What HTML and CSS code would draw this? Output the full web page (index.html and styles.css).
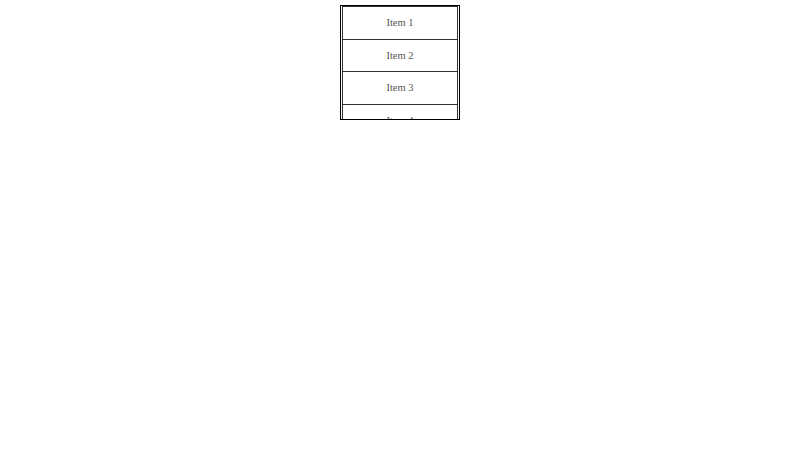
FILE: index.html
```html
<!DOCTYPE html>
<html>
<head>
<meta charset="utf-8">
<link rel="stylesheet" href="styles.css">
</head>
<body>
<div class="list">
  <div class="item">Item 1</div>
  <div class="item">Item 2</div>
  <div class="item">Item 3</div>
  <div class="item">Item 4</div>
  <div class="item">Item 5</div>
</div>
</body>
</html>
```

FILE: styles.css
```css
body {
  margin: 0;
  background: #fff;
  font-family: "Liberation Serif", "Times New Roman", serif;
}
.list {
  box-sizing: border-box;
  width: 120px;
  height: 115px;
  margin: 5px auto 0;
  border: 1px solid #000;
  overflow: hidden;
}
.item {
  box-sizing: border-box;
  width: 116px;
  margin: -1px auto 0;
  border: 1px solid #333;
  padding: 10px 0;
  font-size: 10.5px;
  line-height: 11.5px;
  text-align: center;
  color: #555;
}
.item:first-child {
  margin-top: 0;
}
```
